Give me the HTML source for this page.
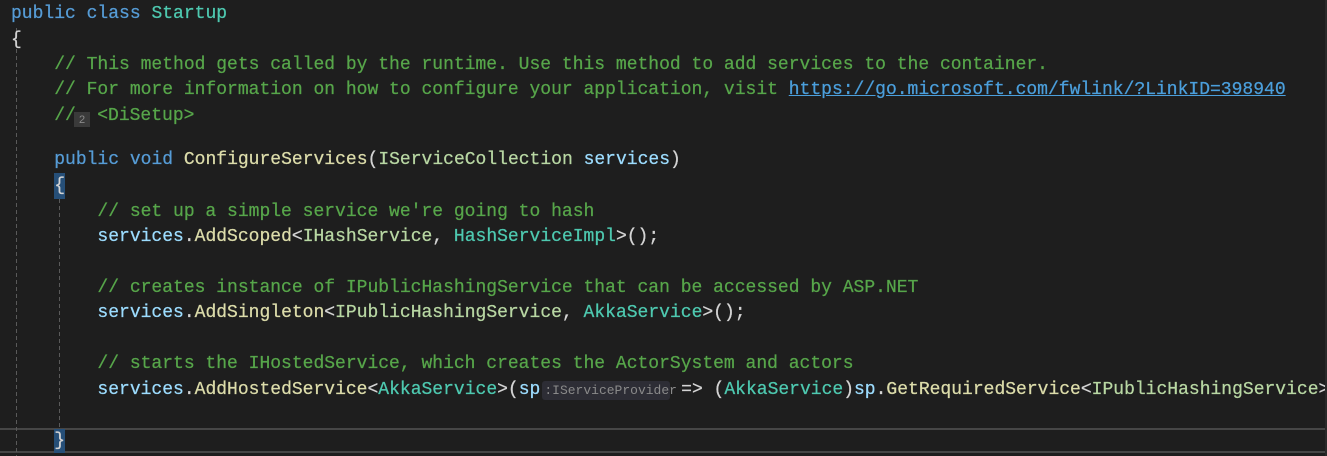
<!DOCTYPE html>
<html><head><meta charset="utf-8"><style>
html,body{margin:0;padding:0;background:#1e1e1e;width:1327px;height:456px;overflow:hidden;position:relative}
.l{position:absolute;white-space:pre;font-family:"Liberation Mono",monospace;font-size:18px;line-height:26px;height:26px;color:#d4d4d4;-webkit-text-stroke:0.25px currentColor}
.k{color:#569cd6}.c{color:#4ec9b0}.g{color:#57a64a}.m{color:#dcdcaa}.v{color:#9cdcfe}.i{color:#b8d7a3}
.u{color:#4b9fdc;text-decoration:underline}
.guide{position:absolute;width:1px;background:repeating-linear-gradient(to bottom,#5a5a5a 0 4px,transparent 4px 7px)}
.hl{position:absolute;background:#264f78}
</style></head><body>
<div style="position:absolute;left:0;top:428px;width:1327px;height:2px;background:#464646"></div>
<div style="position:absolute;left:0;top:451px;width:1327px;height:2px;background:#464646"></div>
<div class="guide" style="left:16px;top:28px;height:428px"></div>
<div class="guide" style="left:59px;top:199px;height:229px"></div>
<div class="hl" style="left:54px;top:173px;width:11px;height:26px"></div>
<div class="hl" style="left:54px;top:429px;width:11px;height:24px"></div>
<div style="position:absolute;left:74px;top:112px;width:16px;height:15px;background:#3a3a3a;color:#8a8a8a;font:11px 'Liberation Sans',sans-serif;text-align:center;line-height:16px">2</div>

<div class="l" style="left:11px;top:1px"><span class="k">public</span> <span class="k">class</span> <span class="c">Startup</span></div>
<div class="l" style="left:11px;top:27px">{</div>
<div class="l g" style="left:11px;top:52px">    // This method gets called by the runtime. Use this method to add services to the container.</div>
<div class="l g" style="left:11px;top:77px">    // For more information on how to configure your application, visit <span class="u">https://go.microsoft.com/fwlink/?LinkID=398940</span></div>
<div class="l g" style="left:11px;top:103px">    //   <span style="position:relative;left:-11px">&lt;DiSetup&gt;</span></div>
<div class="l" style="left:11px;top:147px">    <span class="k">public</span> <span class="k">void</span> <span class="m">ConfigureServices</span>(<span class="i">IServiceCollection</span> <span class="v">services</span>)</div>
<div class="l" style="left:11px;top:173px">    {</div>
<div class="l g" style="left:11px;top:199px">        // set up a simple service we're going to hash</div>
<div class="l" style="left:11px;top:224px">        <span class="v">services</span>.<span class="m">AddScoped</span>&lt;<span class="i">IHashService</span>, <span class="c">HashServiceImpl</span>&gt;();</div>
<div class="l g" style="left:11px;top:275px">        // creates instance of IPublicHashingService that can be accessed by ASP.NET</div>
<div class="l" style="left:11px;top:300px">        <span class="v">services</span>.<span class="m">AddSingleton</span>&lt;<span class="i">IPublicHashingService</span>, <span class="c">AkkaService</span>&gt;();</div>
<div class="l g" style="left:11px;top:351px">        // starts the IHostedService, which creates the ActorSystem and actors</div>
<div class="l" style="left:11px;top:377px">        <span class="v">services</span>.<span class="m">AddHostedService</span>&lt;<span class="c">AkkaService</span>&gt;(<span class="v">sp</span><span style="display:inline-block;width:128px;height:19px;margin-left:2px;vertical-align:0px;background:#2d2d35;border-radius:3px;color:#8a8a8a;font-size:13px;line-height:19px;padding-left:2px;box-sizing:border-box;-webkit-text-stroke:0">:IServiceProvider</span> =&gt; (<span class="c">AkkaService</span>)<span class="v">sp</span>.<span class="m">GetRequiredService</span>&lt;<span class="i">IPublicHashingService</span>&gt;</div>
<div class="l" style="left:11px;top:428px">    }</div>
<div style="position:absolute;right:0;top:0;width:2px;height:456px;background:#2a2a2a"></div>
</body></html>
